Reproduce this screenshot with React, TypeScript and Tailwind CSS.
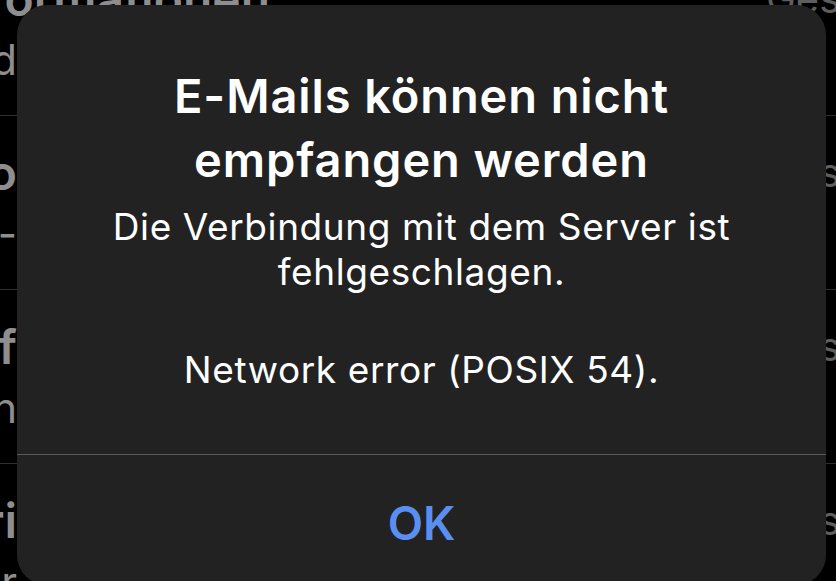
const rows = [
  { sender: "Ihre Kontoinformationen", senderW: "w-[270px]", preview: "Bestellung wurde versend", date: "Gestern" },
  { sender: "Newsletter Info", senderW: "w-[17px]", preview: "Angebot der Woche -", date: "Gestern" },
  { sender: "Tarif", senderW: "w-[17px]", preview: "Ihre Rechnung ist da h", date: "Gestern" },
  { sender: "Fabri", senderW: "w-[17px]", preview: "Crossover", date: "Gestern" },
];

export default function App() {
  return (
    <div
      className="relative w-[836px] h-[581px] overflow-hidden bg-black"
      style={{ fontFamily: "Inter, 'Noto Sans', sans-serif" }}
    >
      {/* background mail list */}
      <div className="-mt-[58px] flex flex-col">
        {rows.map((r, i) => (
          <div key={i} className="flex h-[174px] border-b border-[#2e2e2e]">
            <div className="flex-1 flex flex-col">
              <div className={`mt-[28px] flex justify-end ${r.senderW} whitespace-nowrap text-[48px] leading-[58px] font-semibold text-[#8e8e8e]`}>
                {r.sender}
              </div>
              <div className="mt-[7px] flex justify-end w-[17px] whitespace-nowrap text-[42px] leading-[50px] text-[#8e8e8e]">
                {r.preview}
              </div>
            </div>
            <div className="w-[70px] pt-[30px] whitespace-nowrap text-[40px] leading-[54px] text-[#5e5e5e]">
              {r.date}
            </div>
          </div>
        ))}
      </div>

      {/* alert */}
      <div className="absolute left-[17px] top-[5px] w-[809px] h-[580px] rounded-[30px] bg-[#222222] flex flex-col text-white">
        <div className="h-[449px] flex flex-col items-center text-center pt-[59px]">
          <div className="text-[47px] leading-[64px] font-semibold tracking-[0.9px] w-[640px]">
            E-Mails können nicht empfangen werden
          </div>
          <div className="mt-[12px] text-[37px] leading-[45px] tracking-[0.6px] w-[760px]">
            Die Verbindung mit dem Server ist fehlgeschlagen.
          </div>
          <div className="mt-[53px] text-[37px] leading-[45px] tracking-[0.6px]">
            Network error (POSIX 54).
          </div>
        </div>
        <div className="h-px bg-[#5a5a5a]" />
        <div className="flex justify-center pt-[45px]">
          <div className="text-[46px] leading-[46px] font-semibold text-[#5a8ef0]">OK</div>
        </div>
      </div>
    </div>
  );
}
